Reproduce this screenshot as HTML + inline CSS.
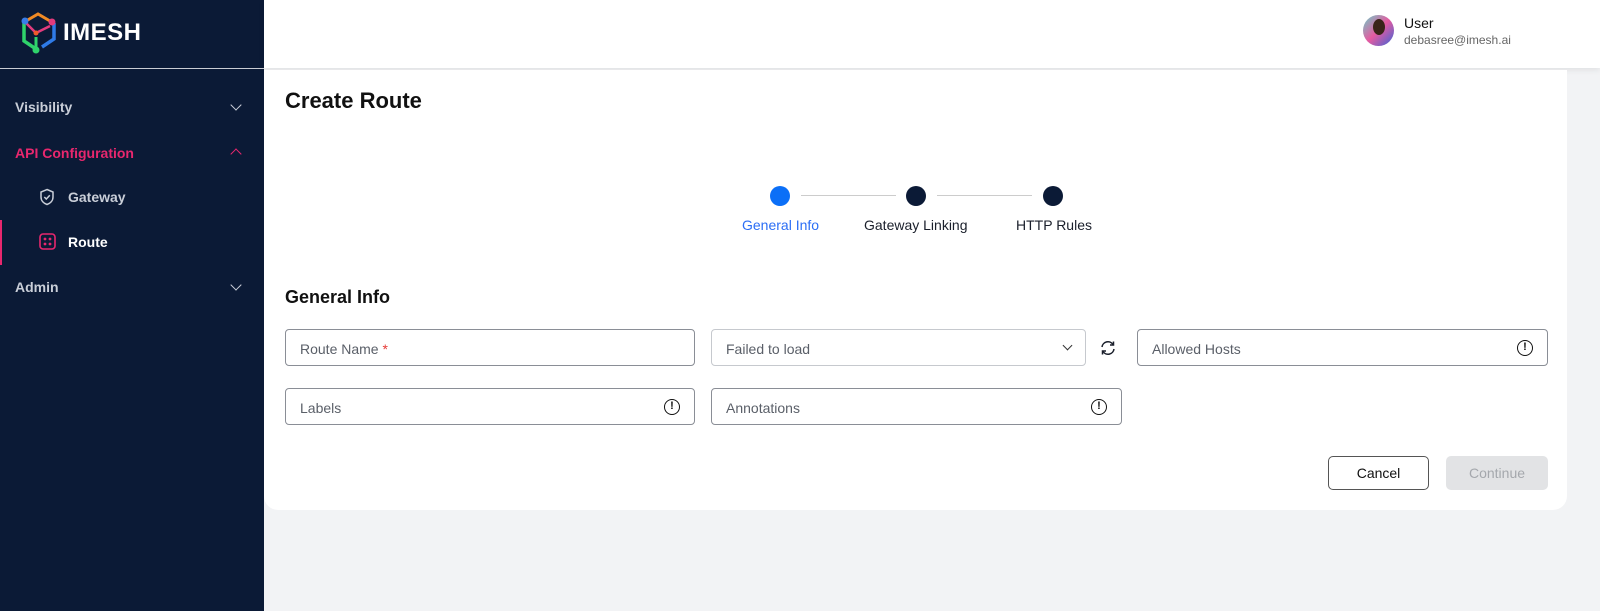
<!DOCTYPE html>
<html><head><style>
*{box-sizing:border-box;margin:0;padding:0}
body{width:1600px;height:611px;overflow:hidden;background:#f2f3f5;font-family:"Liberation Sans",Arial,sans-serif;position:relative}
.sb{position:absolute;left:0;top:0;width:264px;height:611px;background:#0b1a36}
.sb .logo{position:absolute;left:18px;top:9px}
.sb .logotxt{position:absolute;left:63px;top:19px;color:#fff;font-weight:bold;font-size:24px;letter-spacing:0.5px}
.sb .line{position:absolute;left:0;top:68px;width:264px;height:1px;background:#c9ccd3}
.item{position:absolute;left:15px;font-size:14px;font-weight:bold;color:#c9ced8}
.chev{position:absolute;left:232px;width:8px;height:8px;border-right:1.5px solid #c9ced8;border-bottom:1.5px solid #c9ced8;transform:rotate(45deg)}
.top{position:absolute;left:264px;top:0;width:1336px;height:68px;background:#fff;box-shadow:0 2px 6px rgba(0,0,0,0.08)}
.card{position:absolute;left:264px;top:70px;width:1303px;height:440px;background:#fff;border-radius:0 0 14px 14px}
.inp{position:absolute;height:37px;border:1px solid #8a8e96;border-radius:4px;font-size:14px;color:#5a5f68;padding:11px 14px}
.ex{position:absolute;right:14px;top:10px;width:16px;height:16px;border:1.5px solid #111;border-radius:50%;font-size:11px;font-weight:bold;color:#111;text-align:center;line-height:13px}
.dot{position:absolute;top:186px;width:20px;height:20px;border-radius:50%;background:#0b1a36}
.sl{position:absolute;top:195px;height:1px;background:#ccc}
.lbl{position:absolute;top:217px;font-size:14px;color:#1a1f2b}
</style></head><body>
<div class="sb">
<svg class="logo" width="42" height="46" viewBox="0 0 42 46">
<path d="M8 12 L20 5 L32 12" stroke="#f08a24" stroke-width="3" fill="none"/>
<path d="M6 14 L6 32 L18 40" stroke="#2fd36b" stroke-width="3.5" fill="none"/>
<path d="M18 40 L18 28" stroke="#2fd36b" stroke-width="3" fill="none"/>
<path d="M36 14 L36 30 L24 38" stroke="#2f7be8" stroke-width="3.5" fill="none"/>
<path d="M8 14 L18 24 L32 17" stroke="#e23b7d" stroke-width="2.5" fill="none"/>
<circle cx="7" cy="12" r="3.5" fill="#3a7de8"/><circle cx="34" cy="13" r="3.5" fill="#e23b7d"/>
<circle cx="18" cy="41" r="3.5" fill="#2fd36b"/><circle cx="18" cy="24" r="2.5" fill="#f0592a"/>
</svg>
<div class="logotxt">IMESH</div>
<div class="line"></div>
<div class="item" style="top:99px">Visibility</div><div class="chev" style="top:101px"></div>
<div class="item" style="top:145px;color:#e8276e">API Configuration</div><div class="chev" style="top:150px;border-color:#e8276e;transform:rotate(-135deg)"></div>
<svg style="position:absolute;left:39px;top:188px" width="16" height="18" viewBox="0 0 16 18"><path d="M8 1.5 L14 4 V9 C14 13 11 15.5 8 16.5 C5 15.5 2 13 2 9 V4 Z" stroke="#c9ced8" stroke-width="1.5" fill="none"/><path d="M5.3 9 L7.3 11 L10.8 7.2" stroke="#c9ced8" stroke-width="1.5" fill="none"/></svg>
<div class="item" style="top:189px;left:68px">Gateway</div>
<div style="position:absolute;left:0;top:220px;width:2px;height:45px;background:#e8276e"></div>
<svg style="position:absolute;left:39px;top:233px" width="17" height="17" viewBox="0 0 17 17"><rect x="1" y="1" width="15" height="15" rx="3" stroke="#e8276e" stroke-width="1.6" fill="none"/><circle cx="6" cy="6" r="1.4" fill="#e8276e"/><circle cx="11" cy="6" r="1.4" fill="#e8276e"/><circle cx="6" cy="11" r="1.4" fill="#e8276e"/><circle cx="11" cy="11" r="1.4" fill="#e8276e"/></svg>
<div class="item" style="top:234px;left:68px;color:#fff">Route</div>
<div class="item" style="top:279px">Admin</div><div class="chev" style="top:281px"></div>
</div>
<div class="top">
<div style="position:absolute;left:1099px;top:15px;width:31px;height:31px;border-radius:50%;background:linear-gradient(135deg,#6ad0c8,#e65aa0 50%,#3a64d8)"><div style="position:absolute;left:10px;top:4px;width:12px;height:16px;border-radius:50%;background:#3a2418"></div></div>
<div style="position:absolute;left:1140px;top:15px;font-size:14px;color:#111">User</div>
<div style="position:absolute;left:1140px;top:33px;font-size:12px;color:#666">debasree@imesh.ai</div>
</div>
<div class="card"></div>
<div style="position:absolute;left:285px;top:88px;font-size:22px;font-weight:bold;color:#111">Create Route</div>
<div class="dot" style="left:770px;background:#0b6ff7"></div>
<div class="sl" style="left:801px;width:95px"></div>
<div class="dot" style="left:906px"></div>
<div class="sl" style="left:937px;width:95px"></div>
<div class="dot" style="left:1043px"></div>
<div class="lbl" style="left:742px;color:#2b6ef5">General Info</div>
<div class="lbl" style="left:864px">Gateway Linking</div>
<div class="lbl" style="left:1016px">HTTP Rules</div>
<div style="position:absolute;left:285px;top:287px;font-size:18px;font-weight:bold;color:#111">General Info</div>
<div class="inp" style="left:285px;top:329px;width:410px">Route Name<span style="color:#e53935"> *</span></div>
<div class="inp" style="left:711px;top:329px;width:375px;border-color:#c6c9ce">Failed to load<div style="position:absolute;right:14px;top:12px;width:7px;height:7px;border-right:1.5px solid #333;border-bottom:1.5px solid #333;transform:rotate(45deg)"></div></div>
<svg style="position:absolute;left:1099px;top:339px" width="18" height="18" viewBox="0 0 18 18" fill="none" stroke="#1a1f2b" stroke-width="1.5"><path d="M3 8 A6 6 0 0 1 14 5.5"/><path d="M14.5 2.5 V6 H11"/><path d="M15 10 A6 6 0 0 1 4 12.5"/><path d="M3.5 15.5 V12 H7"/></svg>
<div class="inp" style="left:1137px;top:329px;width:411px">Allowed Hosts<div class="ex">!</div></div>
<div class="inp" style="left:285px;top:388px;width:410px">Labels<div class="ex">!</div></div>
<div class="inp" style="left:711px;top:388px;width:411px">Annotations<div class="ex">!</div></div>
<div style="position:absolute;left:1328px;top:456px;width:101px;height:34px;border:1px solid #555;border-radius:5px;font-size:14px;color:#111;text-align:center;line-height:32px">Cancel</div>
<div style="position:absolute;left:1446px;top:456px;width:102px;height:34px;background:#e2e3e5;border-radius:5px;font-size:14px;color:#a5a8ad;text-align:center;line-height:34px">Continue</div>
</body></html>
